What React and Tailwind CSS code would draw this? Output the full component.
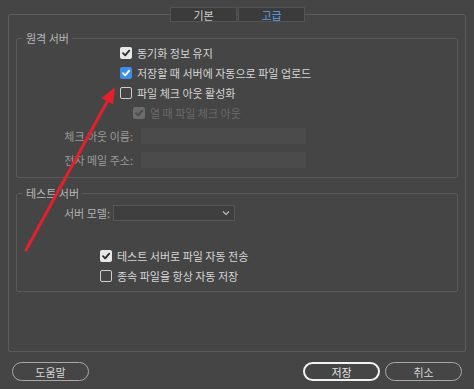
const font = { fontFamily: '"Noto Sans CJK KR", "Noto Sans", sans-serif' };

const Check = ({ variant = "off" }) => {
  // off | white | blue | disabled
  const box = {
    off: "border border-[#cfcfcf] bg-transparent",
    white: "bg-[#e8e8e8]",
    blue: "bg-[#3d8ee8]",
    disabled: "bg-[#6c6c6c]",
  }[variant];
  const stroke = { white: "#2c2c2c", blue: "#ffffff", disabled: "#4a4a4a" }[variant];
  return (
    <span className={`w-[12px] h-[12px] rounded-[2px] flex items-center justify-center shrink-0 ${box}`}>
      {variant !== "off" && (
        <svg width="10" height="10" viewBox="0 0 10 10">
          <path d="M2 5.2 L4.2 7.4 L8.2 2.6" fill="none" stroke={stroke} strokeWidth="1.8" strokeLinecap="round" strokeLinejoin="round" />
        </svg>
      )}
    </span>
  );
};

const CheckRow = ({ variant, label, dim }) => (
  <div className="h-[20px] flex items-center gap-[5px]">
    <Check variant={variant} />
    <span className={`text-[11px] leading-[12px] ${dim ? "text-[#6a6a6a]" : "text-[#d6d6d6]"}`}>{label}</span>
  </div>
);

const FieldRow = ({ label }) => (
  <div className="h-[24px] flex items-center">
    <span className="w-[116px] text-right text-[11px] leading-[12px] text-[#9a9a9a]">{label}</span>
    <span className="ml-[8px] w-[165px] h-[16px] bg-[#4b4b4b]" />
  </div>
);

export default function App() {
  return (
    <div className="relative w-[474px] h-[389px] bg-[#454545] overflow-hidden" style={font}>
      {/* tabs */}
      <div className="relative z-10 pt-[7px] flex justify-center pl-[1px]">
        <div className="flex gap-[1px]">
          <div className="w-[67px] h-[15px] bg-[#3b3b3b] border border-[#535353] flex items-center justify-center text-[11px] leading-[12px] text-[#d0d0d0]">기본</div>
          <div className="w-[67px] h-[15px] bg-[#3b3b3b] border border-[#535353] flex items-center justify-center text-[11px] leading-[12px] text-[#5b9de6]">고급</div>
        </div>
      </div>

      {/* outer panel */}
      <div className="mx-[8px] -mt-[8px] h-[338px] border border-[#5c5c5c] rounded-[2px] px-[7px] pt-[17px]">
        <fieldset className="w-[442px] h-[146px] border border-[#5a5a5a] rounded-[2px] px-0">
          <legend className="ml-[6px] px-[3px] text-[11px] leading-[12px] text-[#b8b8b8]">원격 서버</legend>
          <div className="pl-[103px] -mt-[1px]">
            <CheckRow variant="white" label="동기화 정보 유지" />
            <CheckRow variant="blue" label="저장할 때 서버에 자동으로 파일 업로드" />
            <CheckRow variant="off" label="파일 체크 아웃 활성화" />
            <div className="pl-[13px]">
              <CheckRow variant="disabled" label="열 때 파일 체크 아웃" dim />
            </div>
          </div>
          <div className="mt-[1px]">
            <FieldRow label="체크 아웃 이름:" />
            <FieldRow label="전자 메일 주소:" />
          </div>
        </fieldset>

        <fieldset className="mt-[9px] w-[442px] h-[105px] border border-[#5a5a5a] rounded-[2px] px-0">
          <legend className="ml-[6px] px-[3px] text-[11px] leading-[12px] text-[#b8b8b8]">테스트 서버</legend>
          <div className="h-[24px] flex items-center mt-[2px]">
            <span className="w-[93px] text-right text-[11px] leading-[12px] text-[#b0b0b0]">서버 모델:</span>
            <span className="ml-[3px] w-[122px] h-[16px] bg-[#3f3f3f] border border-[#575757] flex items-center justify-end pr-[4px]">
              <svg width="8" height="6" viewBox="0 0 8 6">
                <path d="M1 1.5 L4 4.5 L7 1.5" fill="none" stroke="#bdbdbd" strokeWidth="1.2" />
              </svg>
            </span>
          </div>
          <div className="pl-[83px] mt-[21px]">
            <CheckRow variant="white" label="테스트 서버로 파일 자동 전송" />
            <CheckRow variant="off" label="종속 파일을 항상 자동 저장" />
          </div>
        </fieldset>
      </div>

      {/* buttons */}
      <div className="mt-[10px] px-[12px] flex items-center">
        <button className="w-[77px] h-[19px] rounded-full border border-[#a9a9a9] text-[11px] leading-[12px] text-[#d6d6d6]">도움말</button>
        <div className="flex-1" />
        <button className="w-[77px] h-[19px] rounded-full border-2 border-[#f2f2f2] text-[11px] leading-[12px] text-[#e6e6e6]">저장</button>
        <button className="ml-[5px] w-[77px] h-[19px] rounded-full border border-[#a9a9a9] text-[11px] leading-[12px] text-[#d6d6d6]">취소</button>
      </div>

      {/* red annotation arrow */}
      <svg className="absolute inset-0 pointer-events-none" width="474" height="389" viewBox="0 0 474 389">
        <line x1="26" y1="250" x2="108" y2="100" stroke="#e3202b" strokeWidth="3" strokeLinecap="round" />
        <polygon points="115,87 113,104.5 101.5,98" fill="#e3202b" />
      </svg>
    </div>
  );
}
